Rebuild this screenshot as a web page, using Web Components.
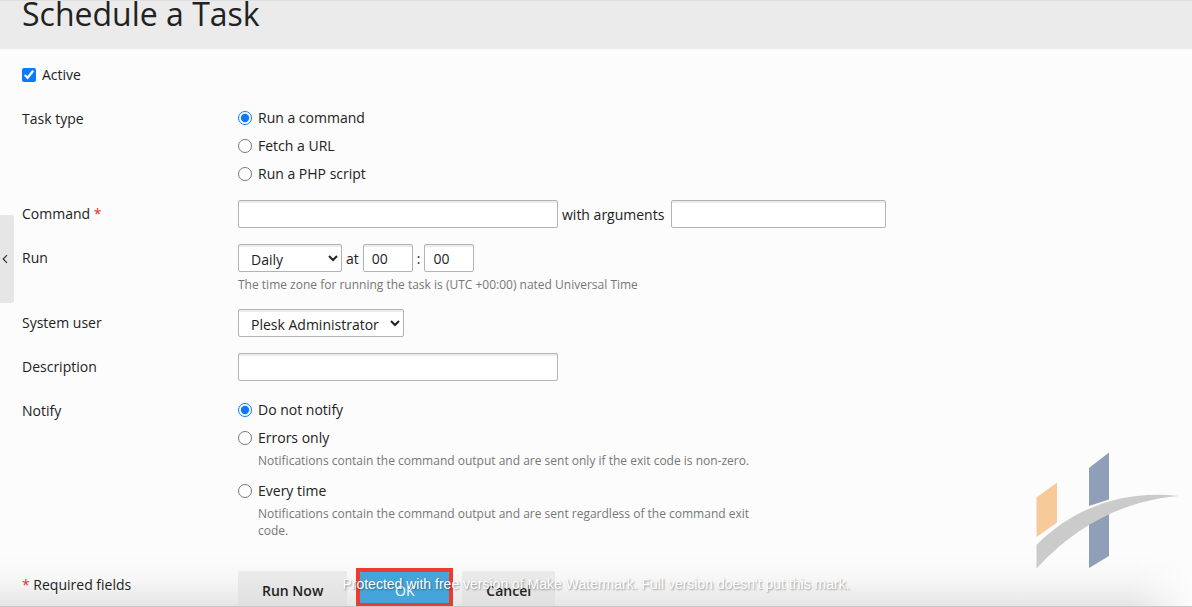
<!DOCTYPE html>
<html lang="en">
<head>
<meta charset="utf-8">
<meta name="viewport" content="width=device-width, initial-scale=1">
<title>Schedule a Task</title>
<style>
  body {
    margin: 0;
    height: 100vh;
    overflow: hidden;
    background: #fcfcfc;
    color: #222;
    font: 14px/20px "Open Sans", "Noto Sans", sans-serif;
  }
</style>
</head>
<body>
<schedule-page></schedule-page>

<script>
// Attach an open shadow root and fill it with the given markup
class BaseElement extends HTMLElement {
  constructor() {
    super();
    this.attachShadow({ mode: "open" });
    this.shadowRoot.innerHTML = this.constructor.markup;
  }
}

class PageHeading extends BaseElement {
  static markup = `
    <style>
      :host {
        display: block;
        padding: 0 22px 21px;
        background: #ebebeb;
        box-shadow: inset 0 1px #dedede;
      }
      h1 {
        margin: 0;
        font-size: 32px;
        font-weight: 400;
        line-height: 28px;
      }
    </style>
    <h1><slot></slot></h1>`;
}

// Label on the left, controls on the right
class FormRow extends BaseElement {
  static markup = `
    <style>
      :host {
        display: grid;
        grid-template-columns: 216px minmax(0, 1fr);
      }
      .name { padding-top: 4px; }
      .field {
        display: flex;
        flex-direction: column;
        gap: 4px;
      }
    </style>
    <div class="name"><slot name="label"></slot></div>
    <div class="field"><slot></slot></div>`;
}

class InlineFields extends BaseElement {
  static markup = `
    <style>
      :host {
        display: flex;
        align-items: center;
        gap: 4px;
      }
    </style>
    <slot></slot>`;
}

class ChoiceList extends BaseElement {
  static markup = `
    <style>
      :host {
        display: flex;
        flex-direction: column;
        gap: 8px;
        padding-top: 3px;
        max-width: 520px;
      }
    </style>
    <slot></slot>`;
}

class ChoiceItem extends BaseElement {
  static markup = `
    <style>
      :host { display: block; }
      ::slotted(label) {
        display: flex;
        align-items: center;
        gap: 6px;
      }
      ::slotted(field-hint) { margin: 4px 0 4px 20px; }
    </style>
    <slot></slot>
    <slot name="hint"></slot>`;
}

class FieldHint extends BaseElement {
  static markup = `
    <style>
      :host {
        display: block;
        color: #777;
        font-size: 12px;
        line-height: 17px;
      }
    </style>
    <slot></slot>`;
}

class RequiredMark extends BaseElement {
  static markup = `
    <style>
      :host { color: #e0301e; }
    </style>
    *`;
}

class ActionButton extends BaseElement {
  static markup = `
    <style>
      :host {
        display: block;
        position: relative;
      }
      button {
        box-sizing: border-box;
        height: 40px;
        padding: 0 24px;
        border: 0;
        border-radius: 2px;
        background: linear-gradient(#ebebeb, #dedede);
        color: #222;
        font: inherit;
        font-weight: 600;
      }
      :host([primary]) button {
        min-width: 89px;
        background: #45a5da;
        color: #fff;
        font-weight: 400;
      }
      /* red frame round the button to press */
      :host([marked])::after {
        content: "";
        position: absolute;
        inset: -3px -4px 4px;
        border: 4px solid #ea3d2f;
        pointer-events: none;
      }
    </style>
    <button type="button"><slot></slot></button>`;
}

class FormFooter extends BaseElement {
  static markup = `
    <style>
      :host {
        display: grid;
        grid-template-columns: 216px minmax(0, 1fr);
        align-items: start;
        box-sizing: border-box;
        overflow: hidden;
        padding: 16px 22px 0;
        border-bottom: 1px solid #c8c8c8;
        background:
          linear-gradient(to right, transparent calc(100% - 60px), #fcfcfc),
          linear-gradient(#fcfcfc, #f6f6f6 50%, #e6e6e6);
      }
      .note { padding-top: 4px; }
      .actions {
        display: flex;
        gap: 13px;
      }
    </style>
    <div class="note"><slot name="note"></slot></div>
    <div class="actions"><slot></slot></div>`;
}

class PanelToggle extends BaseElement {
  static markup = `
    <style>
      :host {
        position: absolute;
        left: 0;
        top: 215px;
      }
      button {
        display: grid;
        place-items: center start;
        width: 14px;
        height: 88px;
        padding: 0 2px;
        border: 0;
        border-radius: 0 3px 3px 0;
        background: #e6e6e6;
      }
      svg { display: block; }
    </style>
    <button type="button" aria-label="Toggle side panel">
      <svg width="6" height="10" viewBox="0 0 6 10" fill="none" stroke="#333" stroke-width="1.2">
        <path d="M5 1.2 1.2 5 5 8.8"/>
      </svg>
    </button>`;
}

class BrandMark extends BaseElement {
  static markup = `
    <style>
      :host {
        position: absolute;
        right: 13px;
        bottom: 38px;
        pointer-events: none;
      }
      svg { display: block; }
    </style>
    <svg width="143" height="117" viewBox="0 0 143 117" aria-hidden="true">
      <path fill="#f7ca99" d="M.5 45.5 21 30.5v40L.5 85z"/>
      <path fill="#8f9fb8" d="M53 16 73 .5V47.500l-20 6.500z"/>
      <path fill="#8f9fb8" d="M53 66 73 56v48l-20 12z"/>
      <path fill="#cbcbcb" d="M.5 93C38 55 88 38 142.500 44 95 48 45 68 .5 116.500z"/>
    </svg>`;
}

class WatermarkText extends BaseElement {
  static markup = `
    <style>
      :host {
        position: absolute;
        left: 0;
        right: 0;
        bottom: 13px;
        color: #fff;
        font-family: "Liberation Sans", Arial, sans-serif;
        text-align: center;
        text-shadow: 1px 1px 2px rgba(0, 0, 0, .4);
        pointer-events: none;
      }
    </style>
    <slot></slot>`;
}

class SchedulePage extends BaseElement {
  static markup = `
    <style>
      :host {
        position: relative;
        display: flex;
        flex-direction: column;
        height: 100%;
        overflow: hidden;
      }
      form {
        flex: 1;
        display: flex;
        flex-direction: column;
        min-height: 0;
      }
      .rows {
        display: flex;
        flex-direction: column;
        gap: 16px;
        padding: 16px 22px 12px;
      }
      .active {
        display: flex;
        align-items: center;
        gap: 6px;
        padding-bottom: 4px;
      }
      form-footer { flex: 1; }
      input, select {
        box-sizing: border-box;
        margin: 0;
        color: inherit;
        font: inherit;
      }
      input[type="checkbox"], input[type="radio"] {
        flex: none;
        width: 14px;
        height: 14px;
        accent-color: #0a7aff;
      }
      input[type="text"], select {
        height: 28px;
        border: 1px solid #b3b3b3;
        border-radius: 2px;
        background: #fff;
        box-shadow: inset 0 2px #ececec;
      }
      input[type="text"] { padding: 1px 8px 0; }
      select { padding: 2px 0 0 8px; }
      inline-fields label { padding-top: 2px; }
      .wide { width: 320px; }
      .medium { width: 215px; }
      .time { width: 50px; }
      #period { width: 104px; }
      #user { width: 166px; }
      .joint { padding-right: 3px; }
    </style>
    <page-heading>Schedule a Task</page-heading>
    <form>
      <div class="rows">
        <label class="active"><input type="checkbox" checked>Active</label>

        <form-row>
          <span slot="label">Task type</span>
          <choice-list role="radiogroup" aria-label="Task type">
            <choice-item><label><input type="radio" name="type" checked>Run a command</label></choice-item>
            <choice-item><label><input type="radio" name="type">Fetch a URL</label></choice-item>
            <choice-item><label><input type="radio" name="type">Run a PHP script</label></choice-item>
          </choice-list>
        </form-row>

        <form-row>
          <label slot="label" for="command">Command <required-mark></required-mark></label>
          <inline-fields>
            <input type="text" id="command" class="wide" required>
            <label class="joint" for="arguments">with arguments</label>
            <input type="text" id="arguments" class="medium">
          </inline-fields>
        </form-row>

        <form-row>
          <label slot="label" for="period">Run</label>
          <inline-fields>
            <select id="period"><option>Daily</option></select>
            <label for="hour">at</label>
            <input type="text" id="hour" class="time" value="00">
            <label for="minute">:</label>
            <input type="text" id="minute" class="time" value="00">
          </inline-fields>
          <field-hint>The time zone for running the task is (UTC +00:00) nated Universal Time</field-hint>
        </form-row>

        <form-row>
          <label slot="label" for="user">System user</label>
          <select id="user"><option>Plesk Administrator</option></select>
        </form-row>

        <form-row>
          <label slot="label" for="description">Description</label>
          <input type="text" id="description" class="wide">
        </form-row>

        <form-row>
          <span slot="label">Notify</span>
          <choice-list role="radiogroup" aria-label="Notify">
            <choice-item><label><input type="radio" name="notify" checked>Do not notify</label></choice-item>
            <choice-item>
              <label><input type="radio" name="notify">Errors only</label>
              <field-hint slot="hint">Notifications contain the command output and are sent only if the exit code is non-zero.</field-hint>
            </choice-item>
            <choice-item>
              <label><input type="radio" name="notify">Every time</label>
              <field-hint slot="hint">Notifications contain the command output and are sent regardless of the command exit code.</field-hint>
            </choice-item>
          </choice-list>
        </form-row>
      </div>

      <form-footer>
        <span slot="note"><required-mark></required-mark> Required fields</span>
        <action-button>Run Now</action-button>
        <action-button primary marked>OK</action-button>
        <action-button>Cancel</action-button>
      </form-footer>
    </form>
    <panel-toggle></panel-toggle>
    <brand-mark></brand-mark>
    <watermark-text>Protected with free version of Make Watermark. Full version doesn't put this mark.</watermark-text>`;
}

customElements.define("page-heading", PageHeading);
customElements.define("form-row", FormRow);
customElements.define("inline-fields", InlineFields);
customElements.define("choice-list", ChoiceList);
customElements.define("choice-item", ChoiceItem);
customElements.define("field-hint", FieldHint);
customElements.define("required-mark", RequiredMark);
customElements.define("action-button", ActionButton);
customElements.define("form-footer", FormFooter);
customElements.define("panel-toggle", PanelToggle);
customElements.define("brand-mark", BrandMark);
customElements.define("watermark-text", WatermarkText);
customElements.define("schedule-page", SchedulePage);
</script>
</body>
</html>
